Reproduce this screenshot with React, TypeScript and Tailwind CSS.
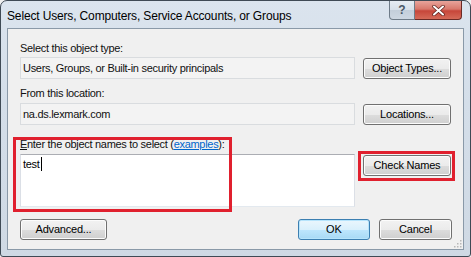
import React from 'react';

const btn =
  'h-[21px] rounded-[3px] border border-[#707070] bg-[linear-gradient(#f2f2f2_0%,#ebebeb_50%,#dddddd_51%,#cfcfcf_100%)] shadow-[inset_0_0_0_1px_#fcfcfc] text-[11px] tracking-[-0.2px] text-black flex items-center justify-center';

const field =
  'h-[22px] border border-[#d9dcdf] bg-[#f3f3f3] px-[2px] flex items-center text-[11px] tracking-[-0.3px] text-[#111]';

const label = 'h-[15px] leading-[15px] text-[11px] tracking-[-0.3px] text-[#111]';

export default function App() {
  return (
    <div className="w-[471px] h-[257px] bg-[#f0f0f0] font-['Liberation_Sans',Arial,sans-serif]">
      <div className="relative w-[471px] h-[257px] rounded-t-[7px] rounded-b-[3px] border border-[#3f4a55] bg-[linear-gradient(180deg,#dbe4ee_0%,#d4dee9_40%,#cfd9e4_100%)] flex flex-col">
        {/* title bar */}
        <div className="h-[27px] flex items-start">
          <div className="pl-[6px] pt-[6px] text-[12px] tracking-[-0.15px] text-black">
            Select Users, Computers, Service Accounts, or Groups
          </div>
          <div className="ml-auto mr-[8px] flex">
            <div className="w-[26px] h-[19px] rounded-bl-[4px] border border-t-0 border-[#6e7b88] bg-[linear-gradient(#e6ecf2_0%,#d6dfe8_50%,#c3ceda_51%,#cdd7e2_100%)] flex items-center justify-center text-[12px] font-bold text-[#4a5664]">
              ?
            </div>
            <div className="w-[47px] h-[19px] rounded-br-[4px] border border-l-0 border-t-0 border-[#6b2a25] bg-[linear-gradient(#e8a49b_0%,#d8786c_45%,#c7463a_55%,#d56a58_100%)] flex items-center justify-center">
              <svg width="13" height="11" viewBox="0 0 13 11">
                <path d="M2 1.5 L11 9.5 M11 1.5 L2 9.5" stroke="#5a1f1a" strokeWidth="3.4" strokeLinecap="round" />
                <path d="M2 1.5 L11 9.5 M11 1.5 L2 9.5" stroke="#ffffff" strokeWidth="2" strokeLinecap="round" />
              </svg>
            </div>
          </div>
        </div>

        {/* client area */}
        <div className="relative ml-[6px] mr-[6px] mb-[6px] flex-1 border border-[#8a99a8] bg-[#f0f0f0] flex flex-col pl-[12px] pr-[11px] pt-[12px]">
          <div className={label}>Select this object type:</div>
          <div className="mt-[1px] flex items-center gap-[8px]">
            <div className={`${field} w-[335px]`}>Users, Groups, or Built-in security principals</div>
            <button className={`${btn} w-[88px]`}>Object Types...</button>
          </div>

          <div className={`${label} mt-[7px]`}>From this location:</div>
          <div className="mt-[2px] flex items-center gap-[8px]">
            <div className={`${field} w-[335px]`}>na.ds.lexmark.com</div>
            <button className={`${btn} w-[88px]`}>Locations...</button>
          </div>

          <div className={`${label} mt-[12px]`}>
            <span className="underline">E</span>nter the object names to select (
            <span className="text-[#0066cc] underline">examples</span>):
          </div>
          <div className="mt-[2px] flex items-start gap-[8px]">
            <div className="w-[335px] h-[53px] border border-[#abadb3] border-l-[#dbdfe6] border-r-[#dbdfe6] border-b-[#e3e9ef] bg-white px-[2px] pt-[1px] text-[11px] tracking-[-0.3px] text-black flex items-start">
              <span>test</span>
              <span className="ml-[1px] mt-[1px] w-[1px] h-[14px] bg-black" />
            </div>
            <button className={`${btn} w-[88px] mt-[1px] h-[20px]`}>Check Names</button>
          </div>

          <div className="mt-[12px] flex items-center">
            <button className={`${btn} w-[87px]`}>Advanced...</button>
            <button className="ml-auto h-[21px] w-[72px] rounded-[3px] border border-[#3c7fb1] bg-[linear-gradient(#eaf6fd_0%,#d9f0fc_50%,#bee6fd_51%,#a7d9f5_100%)] shadow-[inset_0_0_0_1px_#b6e4fc] text-[11px] text-black flex items-center justify-center">
              OK
            </button>
            <button className={`${btn} w-[73px] ml-[9px]`}>Cancel</button>
          </div>

          {/* resize grip */}
          <svg className="absolute right-[1px] bottom-[1px]" width="10" height="10" viewBox="0 0 10 10">
            {[
              [8, 2],
              [5, 5],
              [8, 5],
              [2, 8],
              [5, 8],
              [8, 8],
            ].map(([x, y], i) => (
              <rect key={i} x={x} y={y} width="1.5" height="1.5" fill="#b8b8b8" />
            ))}
          </svg>

          {/* red highlight boxes */}
          <div className="absolute left-[5px] top-[108px] w-[219px] h-[75px] border-[3px] border-[#e0202e]" />
          <div className="absolute left-[350px] top-[122px] w-[97px] h-[30px] border-[3px] border-[#e0202e]" />
        </div>
      </div>
    </div>
  );
}
